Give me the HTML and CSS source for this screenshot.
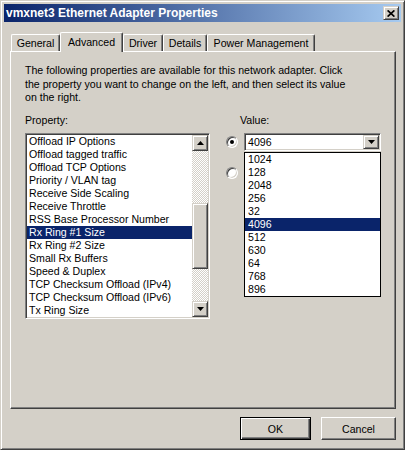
FILE: index.html
```html
<!DOCTYPE html>
<html>
<head>
<meta charset="utf-8">
<title>vmxnet3 Ethernet Adapter Properties</title>
<link rel="stylesheet" href="styles.css">
</head>
<body>
<div class="window">
  <div class="titlebar">
    <span class="title">vmxnet3 Ethernet Adapter Properties</span>
    <span class="close"><svg width="8" height="7" viewBox="0 0 8 7"><path d="M0.6 0.4 L7.4 6.6 M7.4 0.4 L0.6 6.6" stroke="#000" stroke-width="1.7" fill="none"/></svg></span>
  </div>
  <div class="client">
    <div class="tabs">
      <div class="tab t-general">General</div>
      <div class="tab active t-adv">Advanced</div>
      <div class="tab t-driver">Driver</div>
      <div class="tab t-details">Details</div>
      <div class="tab t-power">Power Management</div>
    </div>
    <div class="panel">
      <p class="intro">The following properties are available for this network adapter. Click<br>the property you want to change on the left, and then select its value<br>on the right.</p>
      <div class="cols">
        <div class="col-left">
          <div class="label">Property:</div>
          <div class="listbox">
            <div class="items">
              <div class="item">Offload IP Options</div>
              <div class="item">Offload tagged traffic</div>
              <div class="item">Offload TCP Options</div>
              <div class="item">Priority / VLAN tag</div>
              <div class="item">Receive Side Scaling</div>
              <div class="item">Receive Throttle</div>
              <div class="item">RSS Base Processor Number</div>
              <div class="item sel">Rx Ring #1 Size</div>
              <div class="item">Rx Ring #2 Size</div>
              <div class="item">Small Rx Buffers</div>
              <div class="item">Speed &amp; Duplex</div>
              <div class="item">TCP Checksum Offload (IPv4)</div>
              <div class="item">TCP Checksum Offload (IPv6)</div>
              <div class="item">Tx Ring Size</div>
            </div>
            <div class="vscroll">
              <div class="sbtn"><svg width="7" height="4" viewBox="0 0 7 4"><path d="M0 4 L3.5 0 L7 4 Z" fill="#000"/></svg></div>
              <div class="track"><div class="thumb"></div></div>
              <div class="sbtn"><svg width="7" height="4" viewBox="0 0 7 4"><path d="M0 0 L7 0 L3.5 4 Z" fill="#000"/></svg></div>
            </div>
          </div>
        </div>
        <div class="col-right">
          <div class="label value-label">Value:</div>
          <div class="vrow">
            <span class="radio checked"></span>
            <div class="combo">
              <span class="combo-text">4096</span>
              <span class="combo-btn"><svg width="7" height="4" viewBox="0 0 7 4"><path d="M0 0 L7 0 L3.5 4 Z" fill="#000"/></svg></span>
              <div class="droplist">
                <div class="opt">1024</div>
                <div class="opt">128</div>
                <div class="opt">2048</div>
                <div class="opt">256</div>
                <div class="opt">32</div>
                <div class="opt sel">4096</div>
                <div class="opt">512</div>
                <div class="opt">630</div>
                <div class="opt">64</div>
                <div class="opt">768</div>
                <div class="opt">896</div>
              </div>
            </div>
          </div>
          <div class="vrow2"><span class="radio"></span></div>
        </div>
      </div>
    </div>
    <div class="buttons">
      <button class="btn default">OK</button>
      <button class="btn cancel">Cancel</button>
    </div>
  </div>
</div>
</body>
</html>
```

FILE: styles.css
```css
html, body {
  margin: 0;
  padding: 0;
  background: #ffffff;
}
body {
  font-family: "Liberation Sans", Arial, sans-serif;
  font-size: 10.6px;
  color: #000;
}
.window {
  width: 405px;
  height: 450px;
  box-sizing: border-box;
  background: #d4d0c8;
  border: 1px solid;
  border-color: #d4d0c8 #404040 #404040 #d4d0c8;
  box-shadow: inset 1px 1px #fff, inset -1px -1px #808080;
  padding: 3px;
  display: flex;
  flex-direction: column;
}
.titlebar {
  height: 18px;
  flex: none;
  display: flex;
  align-items: center;
  justify-content: space-between;
  padding-left: 2px;
  background: linear-gradient(to right, #0a246a, #a6caf0);
}
.title {
  color: #fff;
  font-weight: bold;
  font-size: 12px;
  line-height: 18px;
  white-space: nowrap;
}
.close {
  width: 16px;
  height: 14px;
  box-sizing: border-box;
  margin-right: 2px;
  background: #d4d0c8;
  border: 1px solid;
  border-color: #d4d0c8 #404040 #404040 #d4d0c8;
  box-shadow: inset 1px 1px #fff, inset -1px -1px #808080;
  display: flex;
  align-items: center;
  justify-content: center;
}
.close svg { display: block; }
.client {
  flex: 1;
  padding: 10px 5px 0 6px;
  display: flex;
  flex-direction: column;
}
.tabs {
  height: 19px;
  display: flex;
  align-items: flex-end;
  padding-left: 1px;
  flex: none;
}
.tab {
  height: 17px;
  box-sizing: border-box;
  border-top: 1px solid #fff;
  border-left: 1px solid #fff;
  border-right: 1px solid #404040;
  box-shadow: inset -1px 0 #808080;
  border-radius: 2px 2px 0 0;
  text-align: center;
  line-height: 16px;
  white-space: nowrap;
  background: #d4d0c8;
}
.tab.active {
  height: 20px;
  margin-bottom: -1px;
  line-height: 18px;
  position: relative;
  z-index: 1;
}
.t-general { width: 49px; }
.t-adv { width: 63px; }
.t-driver { width: 40px; }
.t-details { width: 44px; }
.t-power { width: 108px; }
.panel {
  height: 358px;
  flex: none;
  box-sizing: border-box;
  border: 1px solid;
  border-color: #fff #404040 #404040 #fff;
  box-shadow: inset -1px -1px #808080;
  padding: 12px 14px 0 14px;
}
.intro {
  margin: 0 0 9.5px 0;
  line-height: 13.5px;
  white-space: nowrap;
}
.cols {
  display: flex;
}
.col-left {
  width: 185px;
}
.col-right {
  margin-left: 16px;
}
.label {
  line-height: 13px;
  height: 13px;
  margin-bottom: 5.5px;
}
.value-label {
  margin-left: 14px;
}
.listbox {
  width: 185px;
  height: 186px;
  box-sizing: border-box;
  border: 1px solid;
  border-color: #808080 #fff #fff #808080;
  box-shadow: inset 1px 1px #404040, inset -1px -1px #d4d0c8;
  padding: 1px;
  display: flex;
  background: #fff;
}
.items {
  flex: 1;
  overflow: hidden;
}
.item, .opt {
  height: 13px;
  line-height: 13px;
  white-space: nowrap;
}
.item { padding-left: 2px; }
.opt { padding-left: 3px; }
.item.sel, .opt.sel {
  background: #0a246a;
  color: #fff;
}
.vscroll {
  width: 16px;
  display: flex;
  flex-direction: column;
  background: repeating-conic-gradient(#fff 0 25%, #d4d0c8 0 50%) 0 0 / 2px 2px;
}
.sbtn, .thumb, .combo-btn {
  box-sizing: border-box;
  background: #d4d0c8;
  border: 1px solid;
  border-color: #d4d0c8 #404040 #404040 #d4d0c8;
  box-shadow: inset 1px 1px #fff, inset -1px -1px #808080;
}
.sbtn {
  width: 16px;
  height: 16px;
  flex: none;
  display: flex;
  align-items: center;
  justify-content: center;
}
.sbtn svg, .combo-btn svg { display: block; }
.track {
  flex: 1;
}
.thumb {
  margin-top: 52px;
  height: 66px;
}
.vrow {
  display: flex;
  align-items: center;
  gap: 6px;
}
.vrow2 {
  margin-top: 16px;
  display: flex;
}
.radio {
  width: 12px;
  height: 12px;
  box-sizing: border-box;
  border-radius: 50%;
  border: 1px solid;
  border-color: #808080 #fff #fff #808080;
  box-shadow: inset 1px 1px #404040, inset -1px -1px #d4d0c8;
  background: #fff;
  position: relative;
  flex: none;
}
.radio.checked::after {
  content: "";
  position: absolute;
  left: 3px;
  top: 3px;
  width: 4px;
  height: 4px;
  border-radius: 50%;
  background: #000;
}
.combo {
  width: 137px;
  height: 18px;
  box-sizing: border-box;
  border: 1px solid;
  border-color: #808080 #fff #fff #808080;
  box-shadow: inset 1px 1px #404040, inset -1px -1px #d4d0c8;
  padding: 1px;
  display: flex;
  background: #fff;
  position: relative;
}
.combo-text {
  flex: 1;
  padding-left: 2px;
  line-height: 14px;
}
.combo-btn {
  width: 16px;
  height: 14px;
  display: flex;
  align-items: center;
  justify-content: center;
}
.droplist {
  position: absolute;
  top: 18px;
  left: -1px;
  width: 137px;
  box-sizing: border-box;
  border: 1px solid #000;
  background: #fff;
  z-index: 2;
}
.buttons {
  margin-top: 8px;
  display: flex;
  justify-content: flex-end;
  gap: 10px;
}
.btn {
  height: 23px;
  box-sizing: border-box;
  font: inherit;
  color: #000;
  background: #d4d0c8;
  padding: 0;
  border: 1px solid;
  border-color: #fff #404040 #404040 #fff;
  box-shadow: inset -1px -1px #808080;
}
.btn.default {
  width: 71px;
  border: 1px solid #000;
  box-shadow: inset 1px 1px #fff, inset -1px -1px #404040, inset -2px -2px #808080;
}
.btn.cancel {
  width: 75px;
}
```
